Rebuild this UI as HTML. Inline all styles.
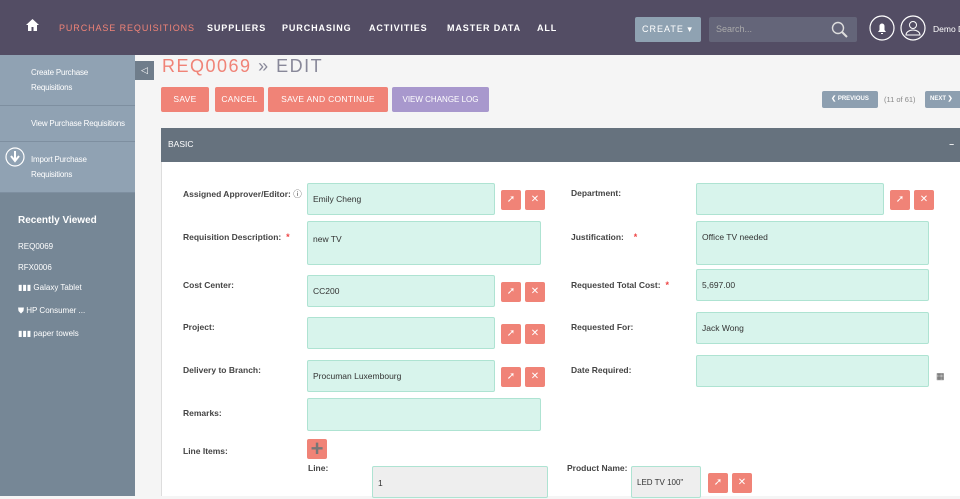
<!DOCTYPE html>
<html><head><style>
*{margin:0;padding:0;box-sizing:border-box}
body{width:960px;height:496px;overflow:hidden;background:#f5f5f5;font-family:"Liberation Sans",sans-serif;position:relative}
.a{position:absolute;white-space:nowrap}
.nav{left:0;top:0;width:960px;height:55px;background:#534d64}
.nl{top:23px;font-size:9px;letter-spacing:.9px;color:#fff;font-weight:bold}
.side{left:0;top:55px;width:135px;height:441px;background:#768796}
.si{left:0;width:135px;background:#90a2b3;border-bottom:1px solid #7e8fa0;color:#fff;font-size:8px;line-height:15px;padding-left:31px;letter-spacing:-.2px}
.rv{color:#fff;font-size:8px;left:18px}
.btn{top:87px;height:25px;color:#fff;font-size:8.5px;letter-spacing:.3px;text-align:center;line-height:25px;background:#f08377;border-radius:2px}
.lab{font-size:8.5px;color:#444;font-weight:bold}
.in{background:#d8f4ec;border:1px solid #aee3d2;border-radius:2px;font-size:8.5px;color:#333;padding-left:5px}
.sb{width:20px;height:20px;background:#f08377;border-radius:2px;color:#fff;font-size:10px;text-align:center;line-height:20px}
.req{color:#e44;font-size:9px}
</style></head><body>
<div class="a nav"></div>
<svg class="a" style="left:26px;top:19px" width="13" height="12" viewBox="0 0 13 12"><path d="M6.5 0L0 6h2v6h3.5V8h2v4H11V6h2z" fill="#fff"/></svg>
<div class="a nl" style="left:59px;color:#f08377;font-weight:normal">PURCHASE REQUISITIONS</div>
<div class="a nl" style="left:207px">SUPPLIERS</div>
<div class="a nl" style="left:282px">PURCHASING</div>
<div class="a nl" style="left:369px">ACTIVITIES</div>
<div class="a nl" style="left:447px">MASTER DATA</div>
<div class="a nl" style="left:537px">ALL</div>
<div class="a" style="left:635px;top:17px;width:66px;height:25px;background:#8fa2b2;border-radius:2px;color:#fff;font-size:9px;letter-spacing:1px;line-height:24px;padding-left:7px">CREATE ▾</div>
<div class="a" style="left:709px;top:17px;width:148px;height:25px;background:#646579;border-radius:2px;color:#aaa;font-size:9px;line-height:25px;padding-left:7px">Search...</div>
<svg class="a" style="left:831px;top:21px" width="17" height="17" viewBox="0 0 17 17"><circle cx="7" cy="7" r="5.5" stroke="#ddd" stroke-width="1.4" fill="none"/><path d="M11 11l5 5" stroke="#ddd" stroke-width="2"/></svg>
<svg class="a" style="left:869px;top:15px" width="60" height="29" viewBox="0 0 60 29"><circle cx="13" cy="13" r="12" stroke="#fff" stroke-width="1.2" fill="none"/><path d="M9 17h8l-1.5-2v-4a2.5 2.5 0 0 0-5 0v4z M12 18h2v1h-2z" fill="#fff"/><circle cx="44" cy="13" r="12" stroke="#fff" stroke-width="1.2" fill="none"/><circle cx="44" cy="10" r="3.5" stroke="#fff" fill="none"/><path d="M37 20a7 5 0 0 1 14 0z" stroke="#fff" fill="none"/></svg>
<div class="a" style="left:933px;top:24px;color:#fff;font-size:8.5px">Demo D</div>

<div class="a side"></div>
<div class="a si" style="top:55px;height:51px;padding-top:10px">Create Purchase<br>Requisitions</div>
<div class="a si" style="top:106px;height:36px;padding-top:10px">View Purchase Requisitions</div>
<div class="a si" style="top:142px;height:51px;padding-top:10px">Import Purchase<br>Requisitions</div>
<svg class="a" style="left:5px;top:147px" width="20" height="20" viewBox="0 0 20 20"><circle cx="10" cy="10" r="9" stroke="#fff" stroke-width="1.2" fill="none"/><path d="M10 4v9M6 9l4 5 4-5" stroke="#fff" stroke-width="2" fill="none"/></svg>
<div class="a" style="left:18px;top:215px;color:#fff;font-size:10px;font-weight:bold">Recently Viewed</div>
<div class="a rv" style="top:242px">REQ0069</div>
<div class="a rv" style="top:263px">RFX0006</div>
<div class="a rv" style="top:283px">▮▮▮ Galaxy Tablet</div>
<div class="a rv" style="top:306px">⛊ HP Consumer ...</div>
<div class="a rv" style="top:329px">▮▮▮ paper towels</div>
<div class="a" style="left:135px;top:61px;width:19px;height:19px;background:#6f7d8b;color:#fff;font-size:9px;text-align:center;line-height:19px">◁</div>

<div class="a" style="left:162px;top:56px;font-size:18px;letter-spacing:1.5px;color:#f08377">REQ0069 <span style="color:#889">» EDIT</span></div>
<div class="a btn" style="left:161px;width:48px">SAVE</div>
<div class="a btn" style="left:215px;width:49px">CANCEL</div>
<div class="a btn" style="left:268px;width:120px">SAVE AND CONTINUE</div>
<div class="a btn" style="left:392px;width:97px;background:#a898cd;letter-spacing:0;font-size:8px">VIEW CHANGE LOG</div>
<div class="a" style="left:822px;top:91px;width:56px;height:17px;background:#8d9fb0;border-radius:2px;color:#fff;font-size:6px;font-weight:bold;text-align:center;line-height:17px">❮ PREVIOUS</div>
<div class="a" style="left:884px;top:95px;color:#888;font-size:7.5px">(11 of 61)</div>
<div class="a" style="left:925px;top:91px;width:40px;height:17px;background:#8d9fb0;border-radius:2px;color:#fff;font-size:6px;font-weight:bold;line-height:17px;padding-left:5px">NEXT ❯</div>

<div class="a" style="left:161px;top:128px;width:799px;height:368px;background:#fff;border-left:1px solid #ddd"></div>
<div class="a" style="left:161px;top:128px;width:799px;height:34px;background:#66727e;color:#fff;font-size:8.5px;line-height:32px;padding-left:7px">BASIC<span style="position:absolute;right:6px;font-weight:bold">–</span></div>

<div class="a lab" style="left:183px;top:188px">Assigned Approver/Editor: <span style="font-weight:normal">ⓘ</span></div>
<div class="a in" style="left:307px;top:183px;width:188px;height:32px;line-height:30px">Emily Cheng</div>
<div class="a sb" style="left:501px;top:190px">➚</div><div class="a sb" style="left:525px;top:190px">✕</div>
<div class="a lab" style="left:571px;top:188px">Department:</div>
<div class="a in" style="left:696px;top:183px;width:188px;height:32px"></div>
<div class="a sb" style="left:890px;top:190px">➚</div><div class="a sb" style="left:914px;top:190px">✕</div>

<div class="a lab" style="left:183px;top:232px">Requisition Description: <span class="req">&nbsp;*</span></div>
<div class="a in" style="left:307px;top:221px;width:234px;height:44px;padding-top:12px">new TV</div>
<div class="a lab" style="left:571px;top:232px">Justification: <span class="req">&nbsp;&nbsp;&nbsp;*</span></div>
<div class="a in" style="left:696px;top:221px;width:233px;height:44px;padding-top:10px">Office TV needed</div>

<div class="a lab" style="left:183px;top:280px">Cost Center:</div>
<div class="a in" style="left:307px;top:275px;width:188px;height:32px;line-height:30px">CC200</div>
<div class="a sb" style="left:501px;top:282px">➚</div><div class="a sb" style="left:525px;top:282px">✕</div>
<div class="a lab" style="left:571px;top:280px">Requested Total Cost: <span class="req">&nbsp;*</span></div>
<div class="a in" style="left:696px;top:269px;width:233px;height:32px;line-height:30px">5,697.00</div>

<div class="a lab" style="left:183px;top:322px">Project:</div>
<div class="a in" style="left:307px;top:317px;width:188px;height:32px"></div>
<div class="a sb" style="left:501px;top:324px">➚</div><div class="a sb" style="left:525px;top:324px">✕</div>
<div class="a lab" style="left:571px;top:322px">Requested For:</div>
<div class="a in" style="left:696px;top:312px;width:233px;height:32px;line-height:30px">Jack Wong</div>

<div class="a lab" style="left:183px;top:365px">Delivery to Branch:</div>
<div class="a in" style="left:307px;top:360px;width:188px;height:32px;line-height:30px">Procuman Luxembourg</div>
<div class="a sb" style="left:501px;top:367px">➚</div><div class="a sb" style="left:525px;top:367px">✕</div>
<div class="a lab" style="left:571px;top:365px">Date Required:</div>
<div class="a in" style="left:696px;top:355px;width:233px;height:32px"></div>
<div class="a" style="left:936px;top:371px;font-size:9px;color:#555">▦</div>

<div class="a lab" style="left:183px;top:408px">Remarks:</div>
<div class="a in" style="left:307px;top:398px;width:234px;height:33px"></div>
<div class="a lab" style="left:183px;top:446px">Line Items:</div>
<div class="a" style="left:307px;top:439px;width:20px;height:20px;background:#f08377;border-radius:2px;color:#777;font-size:22px;line-height:19px;text-align:center;font-weight:bold">+</div>
<div class="a lab" style="left:308px;top:463px">Line:</div>
<div class="a in" style="left:372px;top:466px;width:176px;height:32px;background:#eee;line-height:32px">1</div>
<div class="a lab" style="left:567px;top:463px">Product Name:</div>
<div class="a in" style="left:631px;top:466px;width:70px;height:32px;background:#eee;line-height:32px;font-size:8px">LED TV 100"</div>
<div class="a sb" style="left:708px;top:473px">➚</div><div class="a sb" style="left:732px;top:473px">✕</div>
</body></html>
